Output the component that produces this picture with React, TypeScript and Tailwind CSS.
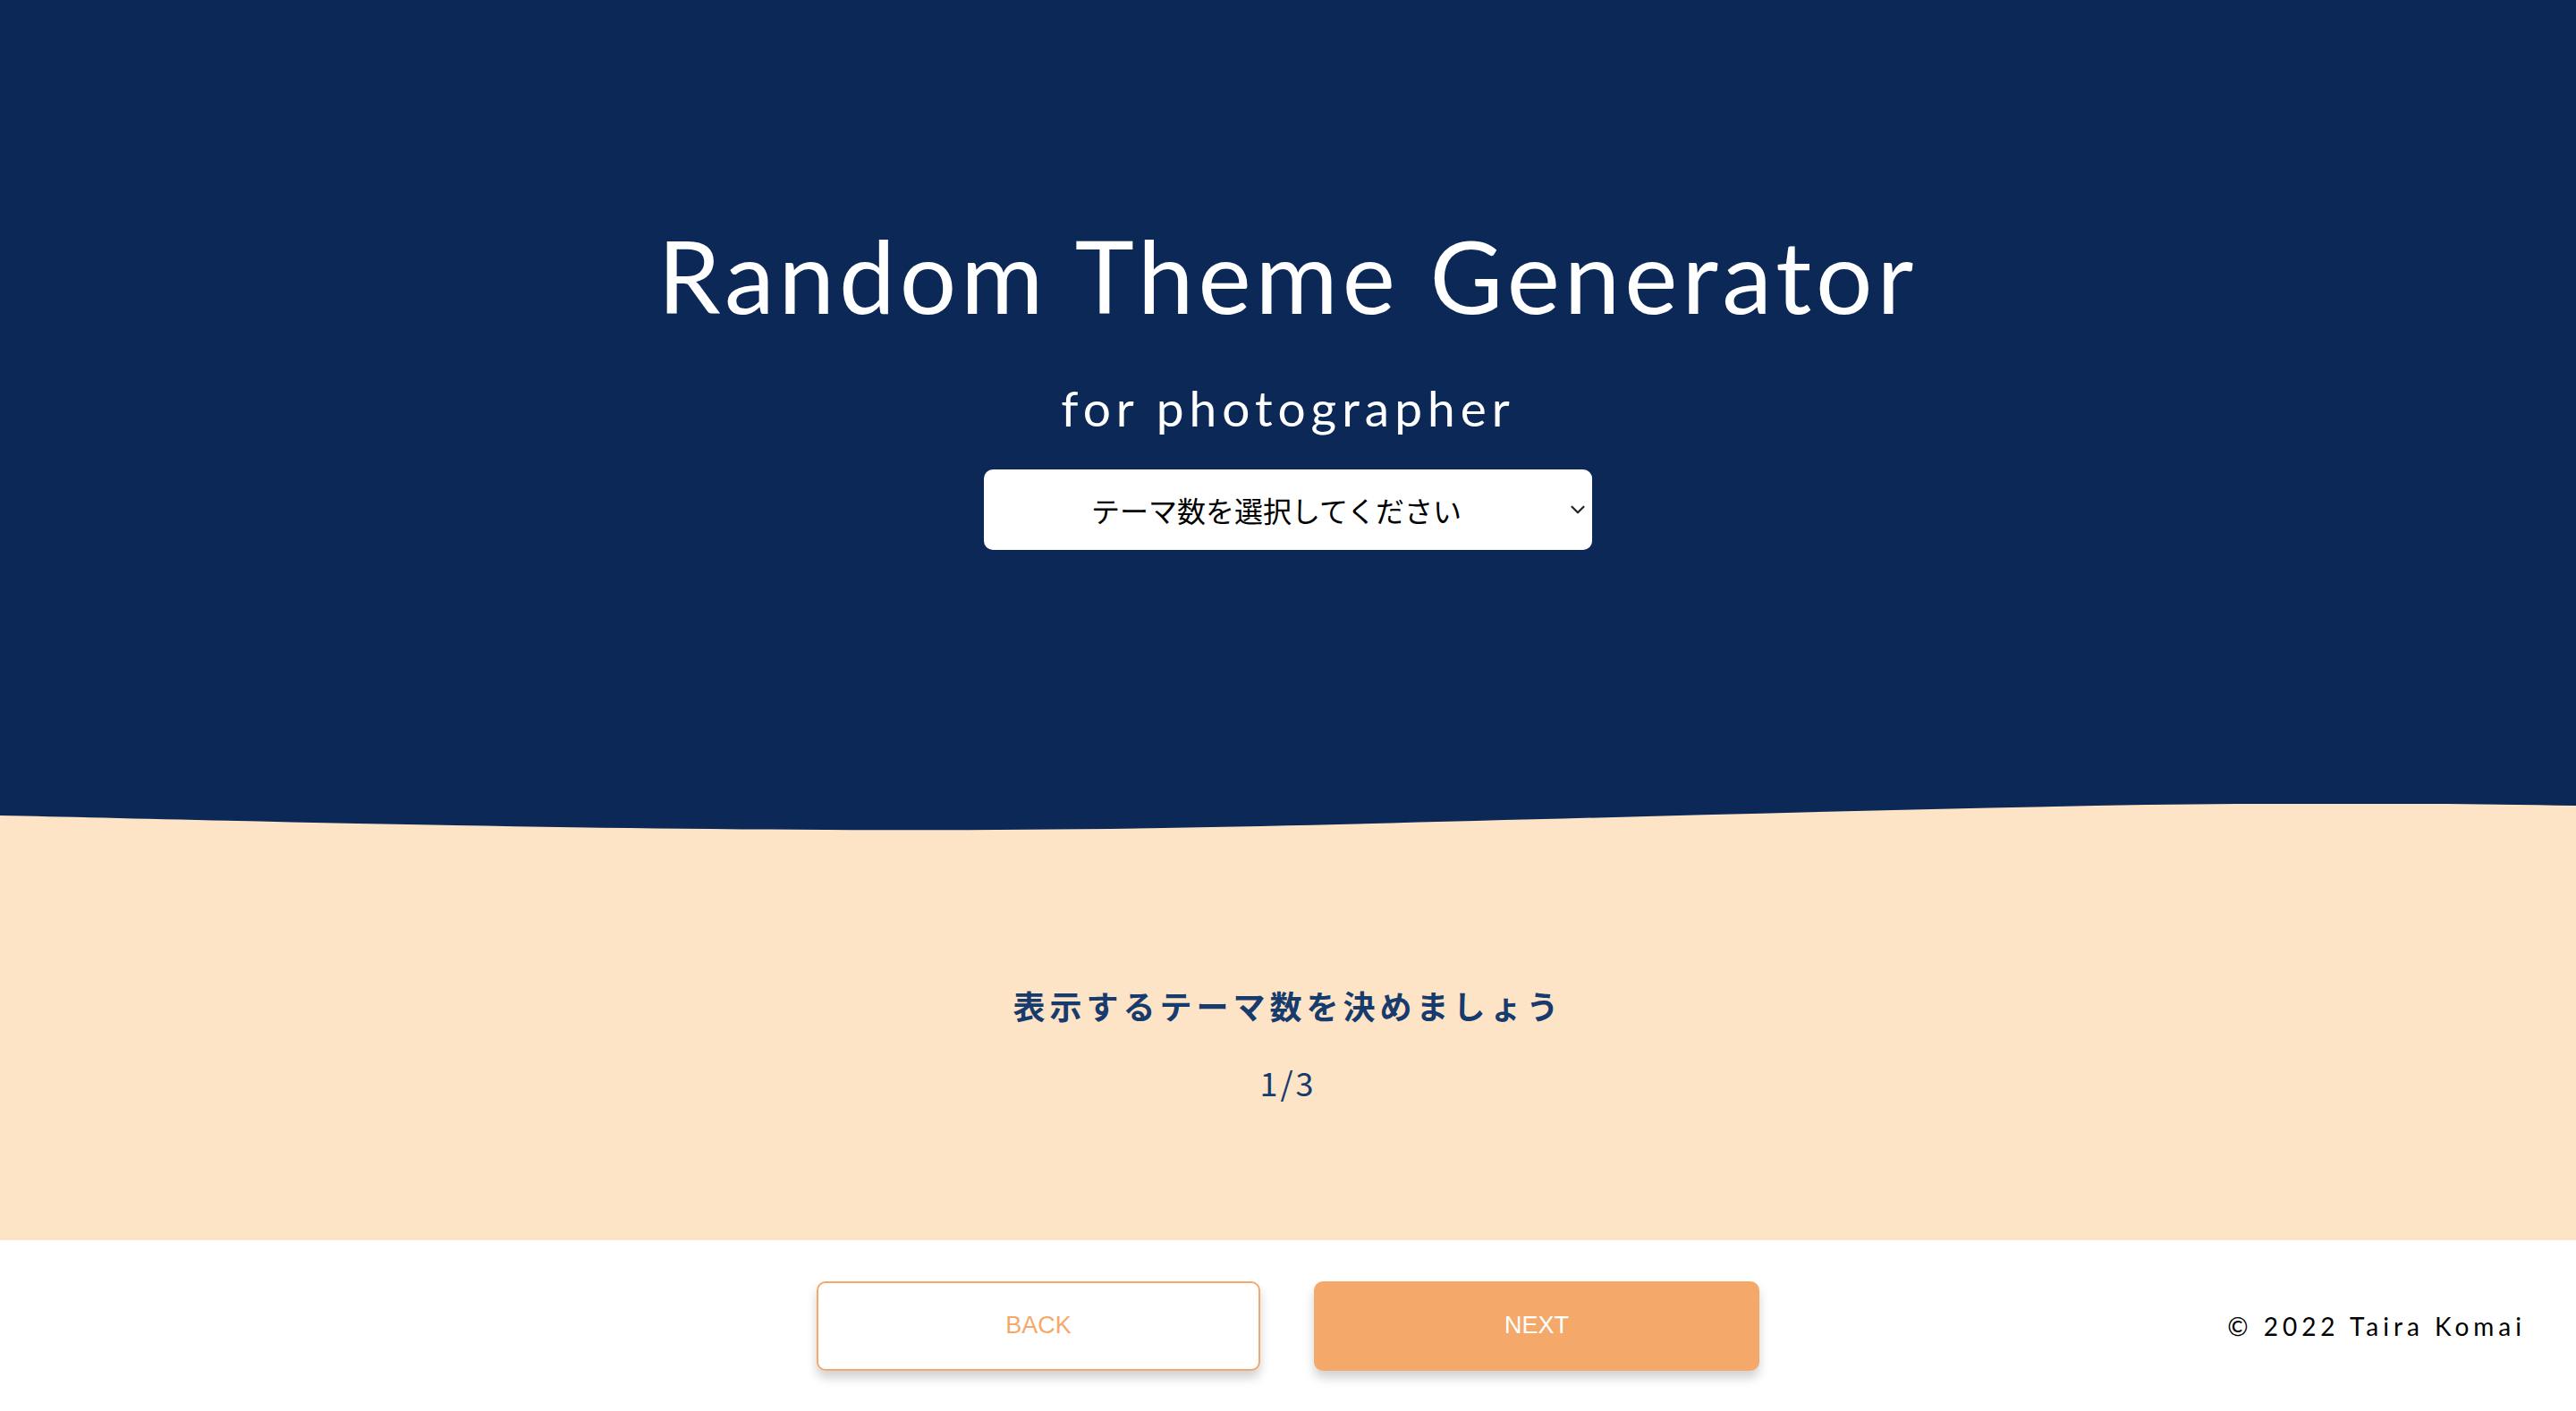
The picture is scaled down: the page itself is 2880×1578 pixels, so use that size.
import { ChevronDown } from 'lucide-react';

const display = "font-['Lato','Noto_Sans',sans-serif]";

function Wave() {
  return (
    <svg
      viewBox="0 0 2880 30"
      preserveAspectRatio="none"
      className="block h-[30px] w-full bg-[#fee4c7]"
    >
      <path
        d="M0 0 H2880 V2 C2700 -1 2560 -1 2400 1 C2000 8 1600 22 1300 27 C1050 31 800 30 400 22 C250 19 100 15 0 13 Z"
        fill="#0b2857"
      />
    </svg>
  );
}

function ThemeSelect() {
  return (
    <div className="relative w-[680px]">
      <select
        defaultValue=""
        className="h-[90px] w-full appearance-none rounded-[10px] bg-white pr-[26px] text-center text-[32px] text-black [text-align-last:center] font-['Noto_Sans_CJK_JP',sans-serif] outline-none"
      >
        <option value="">テーマ数を選択してください</option>
        <option value="1">1</option>
        <option value="2">2</option>
        <option value="3">3</option>
      </select>
      <ChevronDown
        className="pointer-events-none absolute right-[3px] top-1/2 h-[26px] w-[26px] -translate-y-1/2 text-[#222]"
        strokeWidth={2}
      />
    </div>
  );
}

export default function App() {
  return (
    <div className="flex h-[1578px] w-full flex-col">
      {/* Hero */}
      <header className="flex h-[899px] flex-col items-center bg-[#0b2857] pt-[238px] text-white">
        <h1 className={`${display} text-[112px] leading-[140px] tracking-[5px]`}>
          Random Theme Generator
        </h1>
        <p className={`${display} mt-[44px] text-[55px] leading-[68px] tracking-[6px]`}>
          for photographer
        </p>
        <div className="mt-[35px]">
          <ThemeSelect />
        </div>
      </header>
      <Wave />

      {/* Step */}
      <main className="flex h-[458px] flex-col items-center bg-[#fee4c7] pt-[172px] text-[#173b6c]">
        <h2 className="text-[36px] font-bold leading-[46px] tracking-[5px] font-['Noto_Sans_CJK_JP',sans-serif]">
          表示するテーマ数を決めましょう
        </h2>
        <p className="mt-[40px] text-[36px] leading-[46px] tracking-[3px] font-['Noto_Sans_CJK_JP',sans-serif]">
          1/3
        </p>
      </main>

      {/* Footer */}
      <footer className="grid h-[191px] grid-cols-[1fr_auto_1fr] items-center bg-white">
        <div />
        <div className="flex gap-[60px]">
          <button className="h-[100px] w-[496px] rounded-[10px] border-2 border-[#f4a96a] bg-white text-[27px] text-[#f4a96a] shadow-[0_8px_12px_rgba(0,0,0,0.18)] font-['Liberation_Sans',sans-serif]">
            BACK
          </button>
          <button className="h-[100px] w-[498px] rounded-[10px] bg-[#f4a96a] text-[27px] text-white shadow-[0_8px_12px_rgba(0,0,0,0.18)] font-['Liberation_Sans',sans-serif]">
            NEXT
          </button>
        </div>
        <p className={`${display} justify-self-end pr-[56px] text-[28px] tracking-[5px] text-black`}>
          © 2022 Taira Komai
        </p>
      </footer>
    </div>
  );
}
